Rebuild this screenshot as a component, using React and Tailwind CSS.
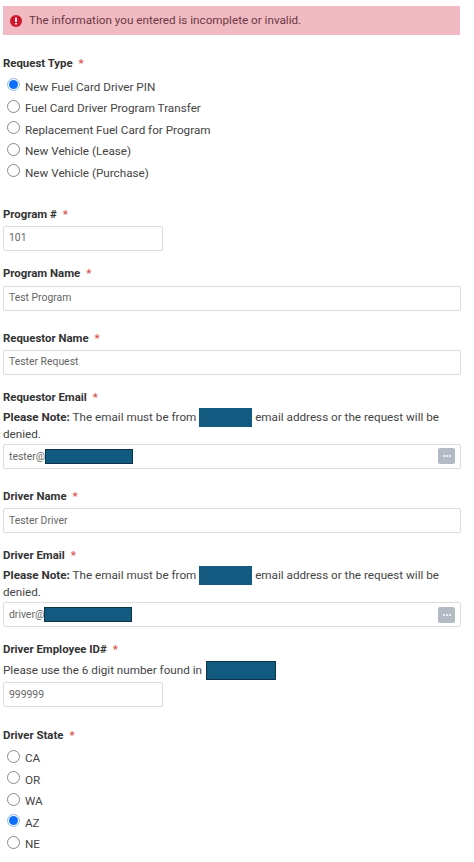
const requestTypes = [
  { label: 'New Fuel Card Driver PIN', checked: true },
  { label: 'Fuel Card Driver Program Transfer' },
  { label: 'Replacement Fuel Card for Program' },
  { label: 'New Vehicle (Lease)' },
  { label: 'New Vehicle (Purchase)' },
];

const states = [
  { label: 'CA' },
  { label: 'OR' },
  { label: 'WA' },
  { label: 'AZ', checked: true },
  { label: 'NE' },
];

function Label({ children }) {
  return (
    <div className="text-[11.4px] leading-[14px] font-bold text-[#333]">
      {children}<span className="ml-[6px] text-[#d9534f]">*</span>
    </div>
  );
}

function Radio({ label, checked }) {
  return (
    <div className="flex h-[21.5px] items-center pl-[4px]">
      <span className={`mb-[6px] grid h-[13px] w-[13px] shrink-0 place-items-center rounded-full border bg-white ${checked ? 'border-[#8fb8f0]' : 'border-[#8a8a8a]'}`}>
        {checked && <span className="h-[9px] w-[9px] rounded-full bg-[#0d6efd]" />}
      </span>
      <span className="ml-[5px] text-[11.7px] text-[#444]">{label}</span>
    </div>
  );
}

function Field({ value, narrow, children }) {
  return (
    <div className={`flex h-[25px] items-center rounded-[2px] border border-[#dcdcdc] bg-white pr-[5px] pl-[5px] text-[10.4px] text-[#666] ${narrow ? 'w-[160px]' : 'w-[458px]'}`}>
      <span>{value}</span>
      {children}
    </div>
  );
}

function Redacted({ className }) {
  return <span className={`inline-block bg-[#135a80] align-middle ${className}`} />;
}

function EmailField({ value, barWidth }) {
  return (
    <Field value={value}>
      <Redacted className={`h-[15px] border border-[#0c3348] ${barWidth}`} />
      <span className="ml-auto flex h-[16px] w-[17px] items-center justify-center gap-[1px] rounded-[2px] bg-[#b4bac4]">
        <span className="h-[2px] w-[2px] rounded-full bg-white" />
        <span className="h-[2px] w-[2px] rounded-full bg-white" />
        <span className="h-[2px] w-[2px] rounded-full bg-white" />
      </span>
    </Field>
  );
}

function EmailNote({ blockWidth }) {
  return (
    <div className="mt-[5px] mb-[1px] w-[458px] text-[11.7px] leading-[17px] text-[#444]">
      <div>
        <b className="text-[#333]">Please Note:</b> The email must be from{' '}
        <Redacted className={`-my-[1px] h-[19px] ${blockWidth}`} /> email address or the request will be
      </div>
      <div>denied.</div>
    </div>
  );
}

export default function App() {
  return (
    <div className="h-[862px] w-[474px] overflow-hidden bg-white pt-[6px] pl-[3px] font-['Roboto',sans-serif]">
      <div className="flex h-[29px] w-[457px] items-center bg-[#f1b9c2] pl-[7px] text-[11.7px] text-[#6b3a44]">
        <svg width="12" height="12" viewBox="0 0 12 12">
          <circle cx="6" cy="6" r="6" fill="#d0142c" />
          <rect x="5.1" y="2.4" width="1.8" height="4.6" rx="0.6" fill="#fff" />
          <circle cx="6" cy="8.8" r="1" fill="#fff" />
        </svg>
        <span className="ml-[7px]">The information you entered is incomplete or invalid.</span>
      </div>

      <div className="mt-[21px]"><Label>Request Type</Label></div>
      <div className="mt-[7px]">
        {requestTypes.map((item) => <Radio key={item.label} {...item} />)}
      </div>

      <div className="mt-[22px]"><Label>Program #</Label></div>
      <div className="mt-[5px]"><Field value="101" narrow /></div>

      <div className="mt-[15px]"><Label>Program Name</Label></div>
      <div className="mt-[6px]"><Field value="Test Program" /></div>

      <div className="mt-[20px]"><Label>Requestor Name</Label></div>
      <div className="mt-[5px]"><Field value="Tester Request" /></div>

      <div className="mt-[15px]"><Label>Requestor Email</Label></div>
      <EmailNote blockWidth="w-[53px]" />
      <EmailField value="tester@" barWidth="w-[88px]" />

      <div className="mt-[20px]"><Label>Driver Name</Label></div>
      <div className="mt-[5px]"><Field value="Tester Driver" /></div>

      <div className="mt-[15px]"><Label>Driver Email</Label></div>
      <EmailNote blockWidth="w-[53px]" />
      <EmailField value="driver@" barWidth="w-[88px]" />

      <div className="mt-[15px]"><Label>Driver Employee ID#</Label></div>
      <div className="mt-[4px] mb-[2px] flex h-[20px] items-center text-[11.7px] text-[#444]">
        Please use the 6 digit number found in
        <Redacted className="ml-[4px] h-[19px] w-[70px] border border-[#0c3348]" />
      </div>
      <Field value="999999" narrow />

      <div className="mt-[21px]"><Label>Driver State</Label></div>
      <div className="mt-[6px]">
        {states.map((item) => <Radio key={item.label} {...item} />)}
      </div>
    </div>
  );
}
